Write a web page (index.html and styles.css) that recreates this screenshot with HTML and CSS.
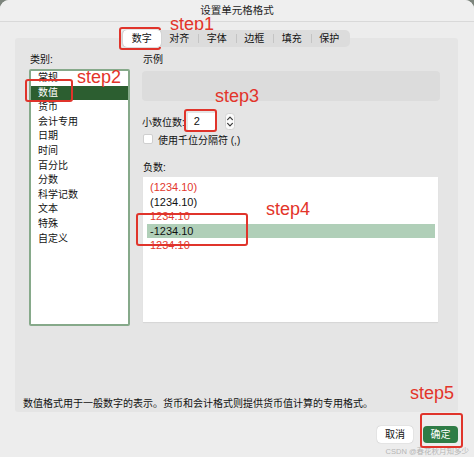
FILE: index.html
```html
<!DOCTYPE html>
<html lang="zh-CN">
<head>
<meta charset="utf-8">
<title>设置单元格格式</title>
<link rel="stylesheet" href="styles.css">
</head>
<body>
<div class="window">
  <div class="titlebar">设置单元格格式</div>
  <div class="tabrow">
    <div class="seg">
      <div class="tab active">数字</div>
      <div class="tab">对齐</div>
      <div class="tab sep">字体</div>
      <div class="tab sep">边框</div>
      <div class="tab sep">填充</div>
      <div class="tab sep">保护</div>
    </div>
  </div>
  <div class="panel">
    <div class="cols">
      <div class="leftcol">
        <div class="label cat-label">类别:</div>
        <div class="catlist">
          <div class="item">常规</div>
          <div class="item sel">数值</div>
          <div class="item">货币</div>
          <div class="item">会计专用</div>
          <div class="item">日期</div>
          <div class="item">时间</div>
          <div class="item">百分比</div>
          <div class="item">分数</div>
          <div class="item">科学记数</div>
          <div class="item">文本</div>
          <div class="item">特殊</div>
          <div class="item">自定义</div>
        </div>
      </div>
      <div class="rightcol">
        <div class="label">示例</div>
        <div class="sample"></div>
        <div class="decrow">
          <span>小数位数:</span>
          <div class="num">2</div>
          <svg class="stepper" width="10" height="17" viewBox="0 0 10 17"><rect x="0.5" y="0.5" width="9" height="16" rx="3" fill="#fafafa" stroke="#d2d2d2"/><path d="M2.6 6.6 L5 4.2 L7.4 6.6 M2.6 10.4 L5 12.8 L7.4 10.4" fill="none" stroke="#3a3a3a" stroke-width="1.2" stroke-linecap="round" stroke-linejoin="round"/></svg>
        </div>
        <div class="chkrow">
          <span class="chk"></span>
          <span>使用千位分隔符 (,)</span>
        </div>
        <div class="label neg-label">负数:</div>
        <div class="neglist">
          <div class="nrow red">(1234.10)</div>
          <div class="nrow">(1234.10)</div>
          <div class="nrow red">1234.10</div>
          <div class="nrow nsel">-1234.10</div>
          <div class="nrow red">1234.10</div>
        </div>
      </div>
    </div>
    <div class="desc">数值格式用于一般数字的表示。货币和会计格式则提供货币值计算的专用格式。</div>
  </div>
  <div class="btnrow">
    <button class="btn">取消</button>
    <button class="btn primary">确定</button>
  </div>
  <div class="wm">CSDN @春花秋月知多少</div>

  <div class="box box1"></div>
  <div class="step step1">step1</div>
  <div class="box box2"></div>
  <div class="step step2">step2</div>
  <div class="box box3"></div>
  <div class="step step3">step3</div>
  <div class="box box4"></div>
  <div class="step step4">step4</div>
  <div class="box box5"></div>
  <div class="step step5">step5</div>
</div>
</body>
</html>
```

FILE: styles.css
```css
html, body {
  margin: 0;
  padding: 0;
  background: #7d857d;
}

.window {
  position: relative;
  width: 474px;
  height: 457px;
  background: #ededed;
  border-radius: 9px 9px 0 0;
  overflow: hidden;
  font-family: "Liberation Sans", "Noto Sans CJK SC", sans-serif;
  font-size: 10px;
  color: #111;
}

.titlebar {
  height: 21px;
  line-height: 21px;
  text-align: center;
  font-size: 10.5px;
  color: #1e1e1e;
  background: #efefef;
  border-bottom: 1px solid #d9d9d9;
}

.tabrow {
  position: relative;
  z-index: 2;
  display: flex;
  padding: 8px 0 0 121px;
}

.seg {
  display: flex;
  height: 17px;
  padding: 0 2px;
  background: #dcdcdc;
  border-radius: 5px;
}

.tab {
  position: relative;
  width: 37.5px;
  height: 17px;
  line-height: 17px;
  text-align: center;
  color: #111;
}

.tab.active {
  background: #fff;
  border-radius: 4px;
  box-shadow: 0 0 1px rgba(0, 0, 0, 0.35);
}

.tab.sep::before {
  content: "";
  position: absolute;
  left: 0;
  top: 4px;
  height: 9px;
  border-left: 1px solid #c4c4c4;
}

.panel {
  margin: -9px 0 0 15px;
  width: 429px;
  padding: 15px 0 0 14px;
  background: #e5e5e5;
  border-radius: 3px;
}

.cols {
  display: flex;
  gap: 12px;
}

.leftcol {
  width: 101px;
}

.label {
  height: 14px;
  line-height: 14px;
  padding-left: 1px;
}

.cat-label {
  margin-bottom: 2px;
}

.catlist {
  box-sizing: border-box;
  height: 257px;
  background: #fff;
  border: 2px solid #86a98a;
  border-radius: 2px;
}

.item {
  height: 14.6px;
  line-height: 14.6px;
  padding-left: 7px;
}

.item.sel {
  background: #2c5e30;
  color: #fff;
}

.rightcol {
  width: 298px;
}

.rightcol > .label {
  margin-bottom: 4px;
}

.sample {
  height: 30px;
  background: #dcdcdc;
  border-radius: 4px;
}

.decrow {
  display: flex;
  align-items: center;
  height: 18px;
  margin-top: 11px;
}

.num {
  box-sizing: border-box;
  width: 27px;
  height: 17px;
  line-height: 17px;
  margin-left: 3px;
  padding-left: 6px;
  background: #fff;
  font-size: 11px;
  color: #111;
}

.stepper {
  margin-left: 10px;
}

.chkrow {
  display: flex;
  align-items: center;
  height: 16px;
  margin-top: 1px;
}

.chk {
  box-sizing: border-box;
  width: 10px;
  height: 10px;
  margin: 0 5px 0 1px;
  background: #fff;
  border: 1px solid #cfcfcf;
  border-radius: 2px;
}

.rightcol > .neg-label {
  margin-top: 14px;
  margin-bottom: 2px;
}

.neglist {
  box-sizing: border-box;
  width: 295px;
  height: 145px;
  margin-left: 1px;
  padding: 3px 3px 0 4px;
  background: #fff;
  box-shadow: 0 1px 1px rgba(0, 0, 0, 0.06);
}

.nrow {
  height: 14.5px;
  line-height: 14.5px;
  padding-left: 3px;
  font-size: 11px;
  color: #111;
}

.nrow.red {
  color: #e2382e;
}

.nrow.nsel {
  background: #b0cfb8;
}

.desc {
  height: 16px;
  line-height: 16px;
  margin: 70px 0 0 -6px;
  color: #111;
}

.btnrow {
  display: flex;
  justify-content: flex-end;
  gap: 10px;
  padding: 14px 16px 0 0;
}

.btn {
  height: 17px;
  padding: 0;
  border: none;
  border-radius: 4px;
  font-family: "Liberation Sans", "Noto Sans CJK SC", sans-serif;
  font-size: 10px;
  line-height: 17px;
}

.btn:first-child {
  width: 36px;
  background: #fff;
  color: #111;
  box-shadow: 0 0 1px rgba(0, 0, 0, 0.35);
}

.btn.primary {
  width: 35px;
  background: #2f7c46;
  color: #fff;
}

.wm {
  position: absolute;
  right: 5px;
  bottom: 1px;
  font-size: 7.5px;
  color: #b5b5b5;
}

.box {
  position: absolute;
  box-sizing: border-box;
  border: 2px solid #e0342b;
  border-radius: 3px;
}

.box1 { left: 119px; top: 27px; width: 42px; height: 23px; }
.box2 { left: 25px; top: 79px; width: 48px; height: 23px; }
.box3 { left: 184px; top: 109px; width: 33px; height: 23px; }
.box4 { left: 136px; top: 213px; width: 112px; height: 33px; }
.box5 { left: 420px; top: 413px; width: 43px; height: 35px; }

.step {
  position: absolute;
  font-family: "Liberation Sans", sans-serif;
  font-size: 18px;
  line-height: 18px;
  color: #e3342a;
}

.step1 { left: 170px; top: 15px; }
.step2 { left: 77px; top: 68px; }
.step3 { left: 215px; top: 87px; }
.step4 { left: 266px; top: 200px; }
.step5 { left: 410px; top: 384px; }
```
